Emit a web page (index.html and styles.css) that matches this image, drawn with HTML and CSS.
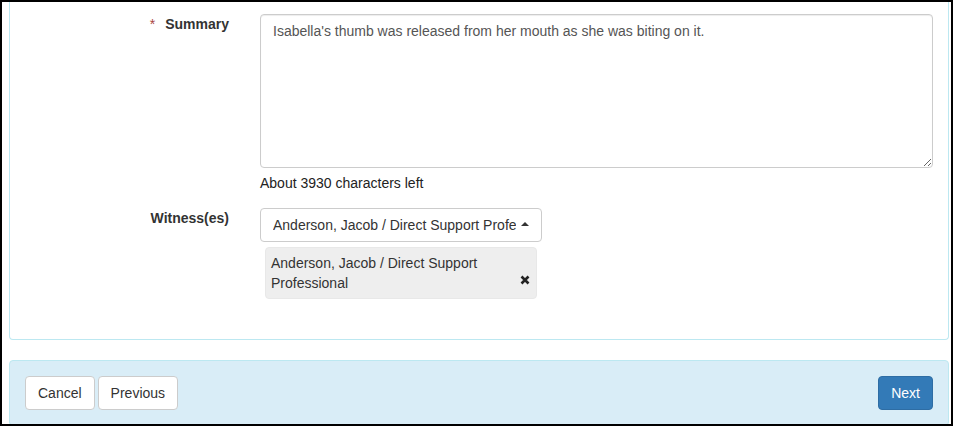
FILE: index.html
```html
<!DOCTYPE html>
<html>
<head>
<meta charset="utf-8">
<link rel="stylesheet" href="styles.css">
</head>
<body>
<div class="frame">
  <div class="panel">
    <div class="form-row">
      <div class="label"><span class="req">*</span>Summary</div>
      <div class="field">
        <textarea class="textarea">Isabella's thumb was released from her mouth as she was biting on it.</textarea>
        <div class="help">About 3930 characters left</div>
      </div>
    </div>
    <div class="form-row row-witness">
      <div class="label">Witness(es)</div>
      <div class="field">
        <div class="select">
          <span class="select-text">Anderson, Jacob / Direct Support Professional</span>
          <span class="caret"></span>
        </div>
        <div class="chip">
          <span class="chip-text">Anderson, Jacob / Direct Support Professional</span>
          <svg class="chip-x" width="10" height="10" viewBox="0 0 10 10"><path d="M1.5 1.5 L8.5 8.5 M8.5 1.5 L1.5 8.5" stroke="#222" stroke-width="2.6" stroke-linecap="butt"/></svg>
        </div>
      </div>
    </div>
  </div>
  <div class="footer">
    <div class="btn-group">
      <button class="btn">Cancel</button>
      <button class="btn">Previous</button>
    </div>
    <button class="btn btn-primary">Next</button>
  </div>
</div>
</body>
</html>
```

FILE: styles.css
```css
* { box-sizing: border-box; }
html, body { margin: 0; padding: 0; background: #fff; }
body {
  font-family: "Liberation Sans", Arial, sans-serif;
  font-size: 14px;
  line-height: 20px;
  color: #333;
}
.frame {
  width: 953px;
  height: 426px;
  border: 2px solid #000;
  overflow: hidden;
  padding: 0 2px 0 7px;
}
.panel {
  border: 1px solid #bce8f1;
  border-top: 0;
  border-radius: 0 0 4px 4px;
  padding: 12px 15px 40px 0;
}
.form-row {
  display: grid;
  grid-template-columns: 219px 673px;
  column-gap: 31px;
}
.row-witness { margin-top: 15px; }
.label {
  text-align: right;
  font-weight: bold;
  color: #333;
}
.req {
  color: #a94442;
  font-weight: normal;
  margin-right: 10px;
}
.textarea {
  display: block;
  width: 673px;
  height: 154px;
  margin: 0;
  padding: 6px 12px;
  border: 1px solid #ccc;
  border-radius: 4px;
  font-family: "Liberation Sans", Arial, sans-serif;
  font-size: 14px;
  line-height: 20px;
  color: #555;
  resize: vertical;
  box-shadow: inset 0 1px 1px rgba(0,0,0,.075);
}
.help {
  margin-top: 5px;
  color: #222;
}
.select {
  width: 282px;
  height: 34px;
  border: 1px solid #ccc;
  border-radius: 4px;
  padding: 6px 12px;
  display: flex;
  align-items: center;
  color: #333;
}
.select-text {
  white-space: nowrap;
  overflow: hidden;
  flex: 1;
  min-width: 0;
}
.caret {
  width: 0;
  height: 0;
  margin-left: 5px;
  border-left: 4px solid transparent;
  border-right: 4px solid transparent;
  border-bottom: 4px solid #333;
  margin-top: -2px;
}
.chip {
  margin: 5px 0 0 5px;
  width: 272px;
  height: 52px;
  background: #eee;
  border: 1px solid #e8e8e8;
  border-radius: 4px;
  padding: 5px 6px 5px 5px;
  display: flex;
  align-items: flex-end;
  justify-content: space-between;
}
.chip-text { width: 240px; }
.chip-x { margin-bottom: 8px; }
.footer {
  margin-top: 20px;
  background: #d9edf7;
  border: 1px solid #bce8f1;
  border-radius: 4px;
  padding: 15px 15px 15px 15px;
  display: flex;
  justify-content: space-between;
}
.btn-group { display: flex; gap: 3px; }
.btn {
  height: 34px;
  padding: 6px 12px;
  font-family: "Liberation Sans", Arial, sans-serif;
  font-size: 14px;
  line-height: 20px;
  color: #333;
  background: #fff;
  border: 1px solid #ccc;
  border-radius: 4px;
}
.btn-primary {
  color: #fff;
  background: #337ab7;
  border-color: #2e6da4;
}
```
